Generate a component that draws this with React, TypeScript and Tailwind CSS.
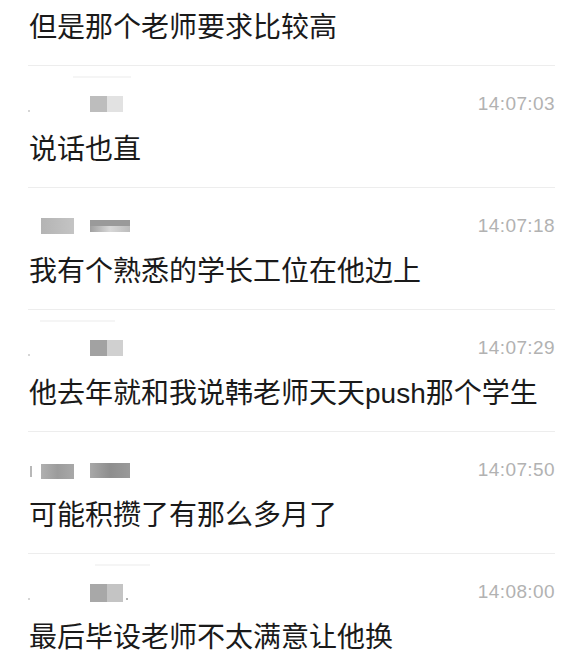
type Msg = {
  time: string;
  text: React.ReactNode;
  name: React.ReactNode;
  faint?: string;
};

const Dot = () => <span className="mt-[14px] block h-[2px] w-[2px] rounded-full bg-[#c8c8c8]" />;

const TwoTone = ({ left, right }: { left: string; right: string }) => (
  <span className="flex h-[16px] w-[33px] blur-[0.6px]">
    <span className={`h-full w-1/2 ${left}`} />
    <span className={`h-full w-1/2 ${right}`} />
  </span>
);

const messages: Msg[] = [
  {
    time: "14:07:03",
    text: "说话也直",
    faint: "ml-[45px] w-[58px]",
    name: (
      <div className="flex items-center">
        <span className="w-[4px]"><Dot /></span>
        <span className="ml-[58px]">
          <TwoTone left="bg-[#bdbdbd]" right="bg-[#e2e2e2]" />
        </span>
      </div>
    ),
  },
  {
    time: "14:07:18",
    text: "我有个熟悉的学长工位在他边上",
    name: (
      <div className="flex items-center">
        <span className="ml-[13px] h-[16px] w-[33px] bg-gradient-to-r from-[#b4b4b4] to-[#c4c4c4] blur-[0.6px]" />
        <span className="ml-[16px] flex h-[12px] w-[40px] flex-col blur-[0.6px]">
          <span className="h-[6px] w-full bg-[#9a9a9a]" />
          <span className="h-[6px] w-full bg-gradient-to-r from-[#a0a0a0] via-[#d8d8d8] to-[#bcbcbc]" />
        </span>
      </div>
    ),
  },
  {
    time: "14:07:29",
    text: (
      <>
        他去年就和我说韩老师天天
        <span className="text-[28px]" style={{ fontFamily: '"Liberation Sans", Arial, sans-serif' }}>
          push
        </span>
        那个学生
      </>
    ),
    faint: "ml-[12px] w-[75px]",
    name: (
      <div className="flex items-center">
        <span className="w-[4px]"><Dot /></span>
        <span className="ml-[58px]">
          <TwoTone left="bg-[#a2a2a2]" right="bg-[#d0d0d0]" />
        </span>
      </div>
    ),
  },
  {
    time: "14:07:50",
    text: "可能积攒了有那么多月了",
    name: (
      <div className="flex items-center">
        <span className="ml-[2px] mt-[2px] h-[11px] w-[2px] bg-[#b8b8b8] blur-[0.4px]" />
        <span className="ml-[9px] mt-[2px] h-[15px] w-[33px] bg-gradient-to-r from-[#b0b0b0] via-[#9c9c9c] to-[#a8a8a8] blur-[0.6px]" />
        <span className="ml-[16px] h-[15px] w-[40px] bg-gradient-to-r from-[#a8a8a8] via-[#8e8e8e] to-[#9a9a9a] blur-[0.6px]" />
      </div>
    ),
  },
  {
    time: "14:08:00",
    text: "最后毕设老师不太满意让他换",
    faint: "ml-[67px] w-[55px]",
    name: (
      <div className="flex items-center">
        <span className="w-[4px]"><Dot /></span>
        <span className="ml-[58px] mt-[2px]">
          <span className="flex h-[18px] w-[33px] blur-[0.6px]">
            <span className="h-full w-1/2 bg-[#a8a8a8]" />
            <span className="h-full w-1/2 bg-[#c4c4c4]" />
          </span>
        </span>
        <span className="ml-[3px] mt-[14px] block h-[2px] w-[2px] bg-[#b0b0b0]" />
      </div>
    ),
  },
];

export default function App() {
  return (
    <div
      className="h-[660px] w-[566px] overflow-hidden bg-white text-[#1a1a1a]"
      style={{ fontFamily: '"Noto Sans CJK SC", "Noto Sans", sans-serif' }}
    >
      {/* partial first message */}
      <div className="h-[65px] pl-[29px] pt-[5px] text-[28px] leading-[40px]">但是那个老师要求比较高</div>

      {messages.map((m) => (
        <div key={m.time} className="ml-[28px] mr-[11px] h-[122px] border-t border-[#ededed]">
          <div className="h-[12px] pt-[10px]">
            {m.faint && <div className={`h-[2px] bg-[#f5f5f5] blur-[0.5px] ${m.faint}`} />}
          </div>
          <div className="mt-[12px] flex h-[28px] items-center justify-between">
            {m.name}
            <span
              className="text-[19px] font-light tracking-[0.4px] text-[#b2b2b2]"
              style={{ fontFamily: '"Liberation Sans", Arial, sans-serif' }}
            >
              {m.time}
            </span>
          </div>
          <div className="mt-[9px] h-[40px] whitespace-nowrap pl-[1px] text-[28px] leading-[40px]">{m.text}</div>
        </div>
      ))}
    </div>
  );
}
